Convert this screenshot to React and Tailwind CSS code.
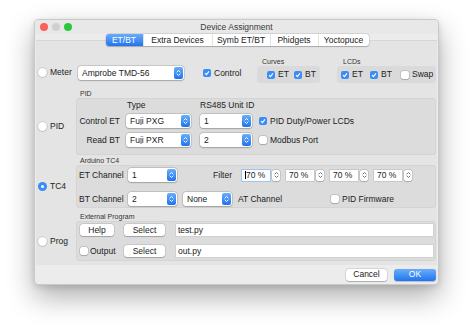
import React from "react";

const UD = ({ c = "#fff" }) => (
  <svg width="5" height="8" viewBox="0 0 5 8" fill="none" stroke={c} strokeWidth="1" strokeLinecap="round" strokeLinejoin="round">
    <path d="M1 3L2.5 1.5L4 3" />
    <path d="M1 5L2.5 6.5L4 5" />
  </svg>
);

function Combo({ text, className }) {
  return (
    <div className={"flex h-[14px] items-center rounded-[3px] bg-white shadow-[0_0_0_0.5px_rgba(0,0,0,0.18),0_0.5px_1.5px_rgba(0,0,0,0.2)] " + className}>
      <span className="flex-1 truncate pl-[4px] text-[8.5px] leading-none">{text}</span>
      <span className="mr-[1px] flex h-[12px] w-[9px] items-center justify-center rounded-[2px] bg-linear-to-b from-[#6aaefa] to-[#1a73f0]">
        <UD />
      </span>
    </div>
  );
}

function Check({ on }) {
  return on ? (
    <span className="flex h-[8px] w-[8px] shrink-0 items-center justify-center rounded-[2px] bg-[#3b8cf6]">
      <svg width="6" height="6" viewBox="0 0 6 6">
        <path d="M1 3.2L2.4 4.6L5 1.3" stroke="#fff" strokeWidth="1.1" fill="none" />
      </svg>
    </span>
  ) : (
    <span className="block h-[8px] w-[8px] shrink-0 rounded-[2px] bg-white shadow-[0_0_0_0.5px_rgba(0,0,0,0.2),0_0.5px_1px_rgba(0,0,0,0.15)]" />
  );
}

function Radio({ on, label }) {
  return (
    <div className="flex items-center gap-[3px] pl-[2px]">
      {on ? (
        <span className="flex h-[9px] w-[9px] items-center justify-center rounded-full bg-[#3b8cf6]">
          <span className="h-[3px] w-[3px] rounded-full bg-white" />
        </span>
      ) : (
        <span className="block h-[9px] w-[9px] rounded-full bg-white shadow-[0_0_0_0.5px_rgba(0,0,0,0.2),0_0.5px_1px_rgba(0,0,0,0.15)]" />
      )}
      <span className="text-[8.5px] leading-none">{label}</span>
    </div>
  );
}

function Btn({ children, className }) {
  return (
    <div className={"flex h-[12px] items-center justify-center rounded-[3px] bg-white text-[8.5px] leading-none shadow-[0_0_0_0.5px_rgba(0,0,0,0.15),0_0.5px_1px_rgba(0,0,0,0.2)] " + className}>
      {children}
    </div>
  );
}

function Spin({ focus }) {
  return (
    <div className="flex w-[38px] items-center gap-[2px]">
      <div className={"flex h-[11px] w-[28px] items-center bg-white pl-[3px] text-[8.5px] leading-none " + (focus ? "shadow-[0_0_0_1px_#9cc4f5]" : "shadow-[0_0_0_0.5px_rgba(0,0,0,0.18)]")}>
        {focus ? <span className="mr-[0.5px] h-[8px] w-[0.5px] bg-black" /> : null}70 %
      </div>
      <div className="flex h-[11px] w-[8px] items-center justify-center rounded-[2px] bg-white shadow-[0_0_0_0.5px_rgba(0,0,0,0.18),0_0.5px_1px_rgba(0,0,0,0.15)]">
        <UD c="#777" />
      </div>
    </div>
  );
}

function Field({ text }) {
  return (
    <div className="ml-[11px] mr-[2px] flex h-[12px] flex-1 items-center bg-white pl-[2px] text-[8.5px] leading-none shadow-[0_0_0_0.5px_rgba(0,0,0,0.1)]">
      {text}
    </div>
  );
}

const SmallLabel = ({ children, className = "" }) => (
  <div className={"flex h-[10px] items-center pl-[4px] text-[7px] leading-none text-[#333] " + className}>{children}</div>
);

export default function App() {
  const tabs = [
    ["ET/BT", "w-[37px]"],
    ["Extra Devices", "w-[69px]"],
    ["Symb ET/BT", "w-[58px]"],
    ["Phidgets", "w-[48px]"],
    ["Yoctopuce", "w-[51px]"],
  ];
  return (
    <div className="h-[334px] w-[474px] overflow-hidden bg-white pl-[34px] pt-[19px] font-['Liberation_Sans',Arial,sans-serif] text-[#222]">
      <div className="flex h-[266px] w-[405px] flex-col overflow-hidden rounded-[4px] border border-[#c9c9c9] bg-[#ececec] shadow-[0_12px_28px_rgba(0,0,0,0.32),0_2px_6px_rgba(0,0,0,0.12)]">
        {/* title bar */}
        <div className="relative flex h-[14px] shrink-0 items-center bg-[#e8e8e8] pl-[5px]">
          <div className="flex gap-[4px]">
            <span className="h-[8px] w-[8px] rounded-full bg-[#fc5f57]" />
            <span className="h-[8px] w-[8px] rounded-full bg-[#d0d0d0]" />
            <span className="h-[8px] w-[8px] rounded-full bg-[#2ac73f]" />
          </div>
          <div className="absolute inset-0 flex items-center justify-center text-[8.5px] leading-none text-[#3a3a3a]">Device Assignment</div>
        </div>
        {/* tabs */}
        <div className="relative z-10 flex h-[12px] shrink-0 justify-center pl-[1px]">
          <div className="flex rounded-[3px] bg-white shadow-[0_0_0_0.5px_rgba(0,0,0,0.15),0_0.5px_1px_rgba(0,0,0,0.2)]">
            {tabs.map(([t, w], i) => (
              <div
                key={t}
                className={
                  "flex items-center justify-center text-[8.5px] leading-none " +
                  w +
                  (i === 0
                    ? " rounded-l-[3px] bg-linear-to-b from-[#69acf9] to-[#1f74f0] text-white"
                    : " border-l border-[#e2e2e2]")
                }
              >
                {t}
              </div>
            ))}
          </div>
        </div>
        {/* pane */}
        <div className="mx-[1px] -mt-[6px] flex h-[225px] shrink-0 flex-col border-t border-[#d6d6d6] bg-[#e4e4e4] pr-[1px] pt-[14px]">
          {/* Meter row */}
          <div className="flex h-[30px] items-start">
            <div className="mt-[10px] flex h-[14px] w-[40px] items-center">
              <Radio label="Meter" />
            </div>
            <Combo text="Amprobe TMD-56" className="ml-[2px] mt-[11px] w-[106px]" />
            <div className="ml-[19px] mt-[11px] flex h-[14px] w-[54px] items-center gap-[3px]">
              <Check on />
              <span className="text-[8.5px] leading-none">Control</span>
            </div>
            <div className="mt-[2px] flex w-[63px] flex-col">
              <div className="flex h-[9px] items-center pl-[5px] text-[7px] leading-none text-[#333]">Curves</div>
              <div className="flex h-[17px] items-center rounded-[3px] bg-[#dadada] pl-[10px] text-[8.5px] leading-none">
                <Check on />
                <span className="ml-[3px] w-[16px]">ET</span>
                <Check on />
                <span className="ml-[3px]">BT</span>
              </div>
            </div>
            <div className="ml-[17px] mt-[2px] flex flex-1 flex-col">
              <div className="flex h-[9px] items-center pl-[6px] text-[7px] leading-none text-[#333]">LCDs</div>
              <div className="flex h-[17px] items-center rounded-[3px] bg-[#dadada] pl-[4px] text-[8.5px] leading-none">
                <Check on />
                <span className="ml-[3px] w-[18px]">ET</span>
                <Check on />
                <span className="ml-[3px] w-[20px]">BT</span>
                <Check />
                <span className="ml-[3px]">Swap</span>
              </div>
            </div>
          </div>

          {/* PID */}
          <div className="flex pt-[3px]">
            <div className="flex w-[40px] flex-col">
              <div className="h-[10px]" />
              <div className="flex h-[57px] items-center">
                <Radio label="PID" />
              </div>
            </div>
            <div className="flex flex-1 flex-col">
              <SmallLabel>PID</SmallLabel>
              <div className="flex h-[57px] flex-col rounded-[3px] border border-[#d4d4d4] bg-[#dcdcdc] pt-[1px] text-[8.5px] leading-none">
                <div className="flex h-[10px] items-center">
                  <span className="w-[49px]" />
                  <span className="w-[74px] pl-[1px]">Type</span>
                  <span>RS485 Unit ID</span>
                </div>
                <div className="mt-[4px] flex h-[14px] items-center">
                  <span className="w-[43px] text-right">Control ET</span>
                  <Combo text="Fuji PXG" className="ml-[6px] w-[65px]" />
                  <Combo text="1" className="ml-[9px] w-[52px]" />
                  <span className="ml-[7px]"><Check on /></span>
                  <span className="ml-[3px]">PID Duty/Power LCDs</span>
                </div>
                <div className="mt-[5px] flex h-[14px] items-center">
                  <span className="w-[43px] text-right">Read BT</span>
                  <Combo text="Fuji PXR" className="ml-[6px] w-[65px]" />
                  <Combo text="2" className="ml-[9px] w-[52px]" />
                  <span className="ml-[7px]"><Check /></span>
                  <span className="ml-[3px]">Modbus Port</span>
                </div>
              </div>
            </div>
          </div>

          {/* TC4 */}
          <div className="flex">
            <div className="flex w-[40px] flex-col">
              <div className="h-[10px]" />
              <div className="flex h-[43px] items-center">
                <Radio on label="TC4" />
              </div>
            </div>
            <div className="flex flex-1 flex-col">
              <SmallLabel>Arduino TC4</SmallLabel>
              <div className="flex h-[43px] flex-col rounded-[3px] border border-[#d4d4d4] bg-[#dcdcdc] pt-[2px] text-[8.5px] leading-none">
                <div className="flex h-[14px] items-center">
                  <span className="w-[51px] pl-[2px]">ET Channel</span>
                  <Combo text="1" className="w-[49px]" />
                  <span className="w-[55px] text-right">Filter</span>
                  <div className="ml-[10px] flex gap-[6px]">
                    <Spin focus />
                    <Spin />
                    <Spin />
                    <Spin />
                  </div>
                </div>
                <div className="mt-[10px] flex h-[14px] items-center">
                  <span className="w-[51px] pl-[2px]">BT Channel</span>
                  <Combo text="2" className="w-[49px]" />
                  <Combo text="None" className="ml-[6px] w-[49px]" />
                  <span className="ml-[6px] w-[93px]">AT Channel</span>
                  <Check />
                  <span className="ml-[3px]">PID Firmware</span>
                </div>
              </div>
            </div>
          </div>

          {/* Prog */}
          <div className="flex pt-[3px]">
            <div className="flex w-[40px] flex-col">
              <div className="h-[10px]" />
              <div className="flex h-[40px] items-center">
                <Radio label="Prog" />
              </div>
            </div>
            <div className="flex flex-1 flex-col">
              <SmallLabel>External Program</SmallLabel>
              <div className="flex h-[40px] flex-col rounded-[3px] border border-[#d4d4d4] bg-[#dcdcdc] pt-[2px] text-[8.5px] leading-none">
                <div className="flex h-[12px] items-center">
                  <Btn className="ml-[3px] w-[34px]">Help</Btn>
                  <Btn className="ml-[10px] w-[41px]">Select</Btn>
                  <Field text="test.py" />
                </div>
                <div className="mt-[9px] flex h-[12px] items-center">
                  <span className="ml-[3px]"><Check /></span>
                  <span className="ml-[2px] w-[34px]">Output</span>
                  <Btn className="w-[41px]">Select</Btn>
                  <Field text="out.py" />
                </div>
              </div>
            </div>
          </div>
        </div>
        {/* bottom bar */}
        <div className="flex flex-1 items-center justify-end gap-[7px] pr-[2px]">
          <Btn className="w-[41px]">Cancel</Btn>
          <div className="flex h-[12px] w-[42px] items-center justify-center rounded-[3px] bg-linear-to-b from-[#69acf9] to-[#1f74f0] text-[8.5px] leading-none text-white shadow-[0_0.5px_1px_rgba(0,0,0,0.2)]">
            OK
          </div>
        </div>
      </div>
    </div>
  );
}
